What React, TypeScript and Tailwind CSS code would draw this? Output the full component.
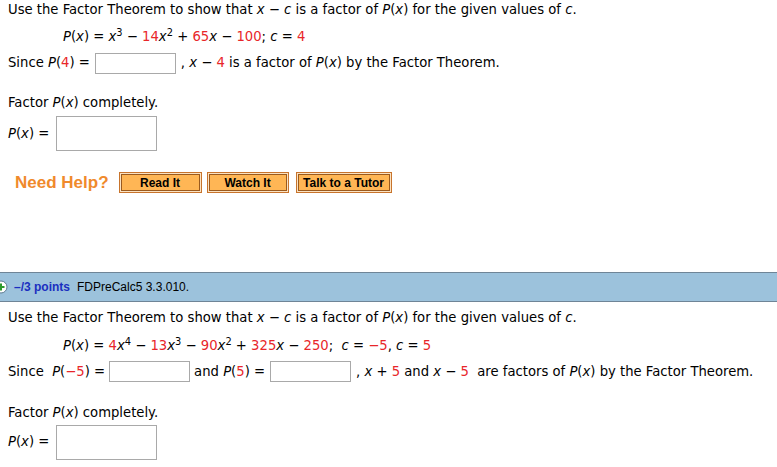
import React from 'react';

const R = ({ children }: { children: React.ReactNode }) => (
  <span className="text-[#e8262a]">{children}</span>
);

const I = ({ children }: { children: React.ReactNode }) => <i>{children}</i>;

const Box = ({ w, h }: { w: string; h: string }) => (
  <span className={`inline-block align-middle border border-[#a9a9a9] bg-white ${w} ${h}`} />
);

const HelpButton = ({ label, w }: { label: string; w: string }) => (
  <button
    className={`${w} h-[21px] border border-[#c8742c] bg-[#fbe2c2] p-px`}
  >
    <span className="flex h-full w-full items-center justify-center border border-[#9a5a1e] bg-[#ffb655] font-['Liberation_Sans',Arial,sans-serif] text-[12px] font-bold text-black">
      {label}
    </span>
  </button>
);

export default function App() {
  return (
    <div className="w-[777px] h-[467px] overflow-hidden bg-white font-['DejaVu_Sans',Verdana,sans-serif] text-[13.2px] text-black">
      {/* Question 1 */}
      <div className="px-2 pt-[1px]">
        <div className="h-[18px] leading-[18px]">
          Use the Factor Theorem to show that <I>x</I> − <I>c</I> is a factor of <I>P</I>(<I>x</I>) for the given values of <I>c</I>.
        </div>
        <div className="mt-[9px] ml-[55px] h-[18px] leading-[18px]">
          <I>P</I>(<I>x</I>) = <I>x</I>
          <sup>3</sup> − <R>14</R>
          <I>x</I>
          <sup>2</sup> + <R>65</R>
          <I>x</I> − <R>100</R>; <I>c</I> = <R>4</R>
        </div>
        <div className="mt-[6px] flex items-center h-[22px]">
          <span>
            Since <I>P</I>(<R>4</R>) ={' '}
          </span>
          <span className="ml-[5px]">
            <Box w="w-[81px]" h="h-[21px]" />
          </span>
          <span className="ml-[5px]">
            , <I>x</I> − <R>4</R> is a factor of <I>P</I>(<I>x</I>) by the Factor Theorem.
          </span>
        </div>
        <div className="mt-[20px] h-[18px] leading-[18px]">
          Factor <I>P</I>(<I>x</I>) completely.
        </div>
        <div className="mt-[4px] flex items-center h-[35px]">
          <span>
            <I>P</I>(<I>x</I>) =
          </span>
          <span className="ml-[7px]">
            <Box w="w-[101px]" h="h-[35px]" />
          </span>
        </div>
        <div className="mt-[19px] ml-[7px] flex items-center gap-[5px]">
          <span className="mr-[5px] font-['Liberation_Sans',Arial,sans-serif] text-[17px] font-bold text-[#f08a2c]">
            Need Help?
          </span>
          <HelpButton label="Read It" w="w-[83px]" />
          <HelpButton label="Watch It" w="w-[82px]" />
          <span className="ml-[2px]">
            <HelpButton label="Talk to a Tutor" w="w-[96px]" />
          </span>
        </div>
      </div>

      {/* Question 2 header */}
      <div className="mt-[76px] h-[30px] flex items-center border-y border-[#6f8597] bg-[#9cc2dc] font-['Liberation_Sans',Arial,sans-serif] text-[12px]">
        <svg width="14" height="14" viewBox="0 0 14 14" className="-ml-[6px]">
          <circle cx="7" cy="7" r="6" fill="#ffffff" stroke="#5a7a90" strokeWidth="1" />
          <rect x="6" y="3.5" width="2" height="7" fill="#2d9a2d" />
          <rect x="3.5" y="6" width="7" height="2" fill="#2d9a2d" />
        </svg>
        <span className="ml-[6px] font-bold text-[#1a2fc0]">–/3 points</span>
        <span className="ml-[7px]">FDPreCalc5 3.3.010.</span>
      </div>

      {/* Question 2 */}
      <div className="px-2">
        <div className="mt-[7px] h-[18px] leading-[18px]">
          Use the Factor Theorem to show that <I>x</I> − <I>c</I> is a factor of <I>P</I>(<I>x</I>) for the given values of <I>c</I>.
        </div>
        <div className="mt-[10px] ml-[55px] h-[18px] leading-[18px]">
          <I>P</I>(<I>x</I>) = <R>4</R>
          <I>x</I>
          <sup>4</sup> − <R>13</R>
          <I>x</I>
          <sup>3</sup> − <R>90</R>
          <I>x</I>
          <sup>2</sup> + <R>325</R>
          <I>x</I> − <R>250</R>;&nbsp; <I>c</I> = <R>−5</R>, <I>c</I> = <R>5</R>
        </div>
        <div className="mt-[6px] flex items-center h-[22px]">
          <span>
            Since&nbsp; <I>P</I>(<R>−5</R>) =
          </span>
          <span className="ml-[4px]">
            <Box w="w-[81px]" h="h-[21px]" />
          </span>
          <span className="ml-[4px]">
            and <I>P</I>(<R>5</R>) =
          </span>
          <span className="ml-[5px]">
            <Box w="w-[81px]" h="h-[21px]" />
          </span>
          <span className="ml-[5px]">
            , <I>x</I> + <R>5</R> and <I>x</I> − <R>5</R>&nbsp; are factors of <I>P</I>(<I>x</I>) by the Factor Theorem.
          </span>
        </div>
        <div className="mt-[21px] h-[18px] leading-[18px]">
          Factor <I>P</I>(<I>x</I>) completely.
        </div>
        <div className="mt-[3px] flex items-center h-[35px]">
          <span>
            <I>P</I>(<I>x</I>) =
          </span>
          <span className="ml-[7px]">
            <Box w="w-[101px]" h="h-[35px]" />
          </span>
        </div>
      </div>
    </div>
  );
}
